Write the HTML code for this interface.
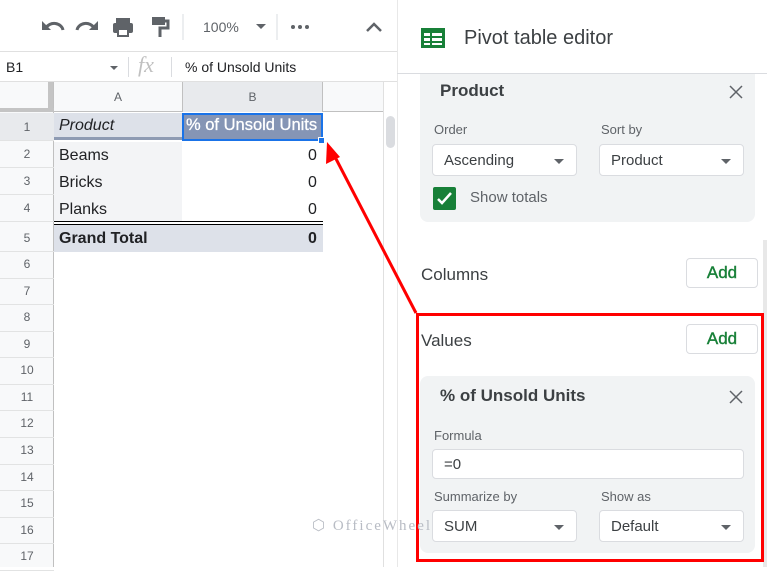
<!DOCTYPE html>
<html><head><style>
*{margin:0;padding:0;box-sizing:border-box}
body{width:767px;height:567px;overflow:hidden;background:#fff;font-family:"Liberation Sans",Arial,sans-serif;position:relative;color:#202124}
.a{position:absolute}
.rn{position:absolute;left:0;width:54px;text-align:center;font-size:12px;color:#5f6368;border-bottom:1px solid #e2e3e3}
.dd{position:absolute;background:#fff;border:1px solid #dadce0;border-radius:4px;font-size:15px;color:#3c4043;padding:7px 11px}
.dd.s:after{content:"";position:absolute;right:12px;top:14px;border:5px solid transparent;border-top:5px solid #5f6368}
.lbl{position:absolute;font-size:13px;color:#5f6368}
.btn{position:absolute;background:#fff;border:1px solid #dadce0;border-radius:4px;color:#188038;font-size:17px;text-align:center;line-height:27px;-webkit-text-stroke:0.4px #188038}
.x{position:absolute;font-size:26px;color:#5f6368;font-weight:100;line-height:26px}
</style></head><body>
<!-- toolbar -->
<div class="a" style="left:0;top:0;width:397px;height:52px;border-bottom:1px solid #e0e0e0"></div>
<svg class="a" style="left:40px;top:12px" width="350" height="30" viewBox="0 0 350 30">
<path d="M6 16 a9 8 0 0 1 17 2" stroke="#5f6368" stroke-width="3" fill="none"/><path d="M2 9v9h9z" fill="#5f6368"/>
<path d="M54 16 a9 8 0 0 0 -17 2" stroke="#5f6368" stroke-width="3" fill="none"/><path d="M58 9v9h-9z" fill="#5f6368"/>
<rect x="76" y="6" width="14" height="5" fill="#5f6368"/><rect x="73" y="11" width="20" height="10" rx="2" fill="#5f6368"/><rect x="78" y="17" width="10" height="7" fill="#fff" stroke="#5f6368" stroke-width="2"/>
<path d="M112 5h13v8h-13z" fill="#5f6368"/><path d="M125 9h3v7h-8v9" stroke="#5f6368" stroke-width="3" fill="none"/>
<line x1="143" y1="2" x2="143" y2="28" stroke="#dadce0"/>
<text x="163" y="20" font-size="14" fill="#5f6368" font-family="Liberation Sans">100%</text>
<path d="M216 12h10l-5 5z" fill="#5f6368"/>
<line x1="237" y1="2" x2="237" y2="28" stroke="#dadce0"/>
<circle cx="253" cy="15" r="2" fill="#5f6368"/><circle cx="260" cy="15" r="2" fill="#5f6368"/><circle cx="267" cy="15" r="2" fill="#5f6368"/>
<path d="M327 19l7-7 7 7" stroke="#5f6368" stroke-width="2.5" fill="none"/>
</svg>
<!-- formula bar -->
<div class="a" style="left:0;top:52px;width:397px;height:30px;border-bottom:1px solid #e0e0e0"></div>
<div class="a" style="left:6px;top:59px;font-size:14px">B1</div>
<div class="a" style="left:110px;top:66px;border:4px solid transparent;border-top:4px solid #5f6368"></div>
<div class="a" style="left:128px;top:57px;width:1px;height:20px;background:#dadce0"></div>
<div class="a" style="left:138px;top:52px;font-size:22px;font-style:italic;color:#c0c0c0;font-family:'Liberation Serif',serif">fx</div>
<div class="a" style="left:171px;top:57px;width:1px;height:20px;background:#dadce0"></div>
<div class="a" style="left:185px;top:59px;font-size:14px">% of Unsold Units</div>
<!-- grid -->
<div class="a" style="left:0;top:82px;width:383px;height:30px;background:#f8f9fa;border-bottom:1px solid #c0c0c0"></div>
<div class="a" style="left:0;top:82px;width:54px;height:485px;background:#f8f9fa;border-right:1px solid #c0c0c0"></div>
<div class="a" style="left:48px;top:82px;width:5px;height:30px;background:#c4c4c4"></div>
<div class="a" style="left:0;top:108px;width:54px;height:4px;background:#c4c4c4"></div>
<div class="a" style="left:182px;top:82px;width:141px;height:30px;background:#e8eaed;border-left:1px solid #c0c0c0;border-right:1px solid #c0c0c0"></div>
<div class="a" style="left:54px;top:90px;width:128px;text-align:center;font-size:12px;color:#5f6368">A</div>
<div class="a" style="left:182px;top:90px;width:141px;text-align:center;font-size:12px;color:#5f6368">B</div>
<div class="a" style="left:383px;top:82px;width:14px;height:485px;background:#fff;border-left:1px solid #e0e0e0"></div>
<div class="a" style="left:386px;top:116px;width:9px;height:32px;background:#dadce0;border-radius:5px"></div>
<div class="rn" style="top:113px;height:28px;line-height:28px;background:#e8eaed">1</div>
<div class="rn" style="top:141px;height:27px;line-height:27px">2</div>
<div class="rn" style="top:168px;height:27px;line-height:27px">3</div>
<div class="rn" style="top:195px;height:27px;line-height:27px">4</div>
<div class="rn" style="top:222px;height:30px;line-height:32px">5</div>
<div class="rn" style="top:252px;height:27px;line-height:25px">6</div>
<div class="rn" style="top:279px;height:26px;line-height:24px">7</div>
<div class="rn" style="top:305px;height:27px;line-height:25px">8</div>
<div class="rn" style="top:332px;height:26px;line-height:24px">9</div>
<div class="rn" style="top:358px;height:27px;line-height:25px">10</div>
<div class="rn" style="top:385px;height:26px;line-height:24px">11</div>
<div class="rn" style="top:411px;height:27px;line-height:25px">12</div>
<div class="rn" style="top:438px;height:27px;line-height:25px">13</div>
<div class="rn" style="top:465px;height:26px;line-height:24px">14</div>
<div class="rn" style="top:491px;height:27px;line-height:25px">15</div>
<div class="rn" style="top:518px;height:26px;line-height:24px">16</div>
<div class="rn" style="top:544px;height:27px;line-height:25px">17</div>
<!-- cells -->
<div class="a" style="left:54px;top:113px;width:129px;height:27px;background:#dde1e9;border-bottom:3px solid #8e9bb3"></div>
<div class="a" style="left:59px;top:117px;font-size:16px;font-style:italic">Product</div>
<div class="a" style="left:182px;top:113px;width:141px;height:28px;background:#8595b5;border:2px solid #1a73e8"></div>
<div class="a" style="left:186px;top:116px;font-size:16.5px;color:#fff;-webkit-text-stroke:0.3px #fff">% of Unsold Units</div>
<div class="a" style="left:318px;top:137px;width:7px;height:7px;background:#1a73e8;border:1px solid #fff"></div>
<div class="a" style="left:54px;top:142px;width:128px;height:80px;background:#f3f4f6"></div>
<div class="a" style="left:59px;top:147px;font-size:16px">Beams</div>
<div class="a" style="left:59px;top:174px;font-size:16px">Bricks</div>
<div class="a" style="left:59px;top:201px;font-size:16px">Planks</div>
<div class="a" style="left:308px;top:147px;font-size:16px">0</div>
<div class="a" style="left:308px;top:174px;font-size:16px">0</div>
<div class="a" style="left:308px;top:201px;font-size:16px">0</div>
<div class="a" style="left:54px;top:221px;width:269px;height:4px;border-top:1px solid #000;border-bottom:1px solid #000"></div>
<div class="a" style="left:54px;top:225px;width:269px;height:27px;background:#dde1e9"></div>
<div class="a" style="left:59px;top:230px;font-size:16px;font-weight:bold">Grand Total</div>
<div class="a" style="left:308px;top:230px;font-size:16px;font-weight:bold">0</div>
<!-- panel -->
<div class="a" style="left:397px;top:0;width:370px;height:567px;background:#fff;border-left:1px solid #e8e8e8"></div>
<div class="a" style="left:397px;top:73px;width:370px;height:1px;background:#dadce0"></div>
<svg class="a" style="left:421px;top:28px" width="24" height="20"><rect x="0" y="0" width="24" height="20" fill="#188038"/><rect x="3" y="5" width="6" height="3" fill="#fff"/><rect x="11" y="5" width="10" height="3" fill="#fff"/><rect x="3" y="10" width="6" height="3" fill="#fff"/><rect x="11" y="10" width="10" height="3" fill="#fff"/><rect x="3" y="15" width="6" height="2" fill="#fff"/><rect x="11" y="15" width="10" height="2" fill="#fff"/></svg>
<div class="a" style="left:464px;top:27px;font-size:20px;color:#3c4043">Pivot table editor</div>
<div class="a" style="left:420px;top:74px;width:335px;height:148px;background:#f1f3f4;border-radius:0 0 8px 8px"></div>
<div class="a" style="left:440px;top:81px;font-size:17px;font-weight:bold;color:#3c4043">Product</div>
<svg class="a" style="left:729px;top:85px" width="14" height="14"><path d="M1 1l12 12M13 1L1 13" stroke="#5f6368" stroke-width="1.5"/></svg>
<div class="lbl" style="left:434px;top:122px">Order</div>
<div class="lbl" style="left:601px;top:122px">Sort by</div>
<div class="dd s" style="left:432px;top:144px;width:145px;height:32px">Ascending</div>
<div class="dd s" style="left:599px;top:144px;width:145px;height:32px">Product</div>
<div class="a" style="left:433px;top:187px;width:23px;height:23px;background:#188038;border-radius:2px"></div>
<svg class="a" style="left:436px;top:191px" width="17" height="15"><path d="M2 8l4 4 9-10" stroke="#fff" stroke-width="2.5" fill="none"/></svg>
<div class="a" style="left:470px;top:189px;font-size:15px;color:#5f6368">Show totals</div>
<div class="a" style="left:421px;top:265px;font-size:17px;color:#3c4043">Columns</div>
<div class="btn" style="left:686px;top:258px;width:72px;height:30px">Add</div>
<div class="a" style="left:763px;top:240px;width:4px;height:327px;background:#e8e8e8"></div>
<div class="a" style="left:416px;top:313px;width:348px;height:249px;border:3px solid #f00"></div>
<div class="a" style="left:421px;top:331px;font-size:17px;color:#3c4043">Values</div>
<div class="btn" style="left:686px;top:324px;width:72px;height:30px">Add</div>
<div class="a" style="left:420px;top:376px;width:335px;height:177px;background:#f1f3f4;border-radius:8px"></div>
<div class="a" style="left:440px;top:386px;font-size:17px;font-weight:bold;color:#3c4043">% of Unsold Units</div>
<svg class="a" style="left:729px;top:390px" width="14" height="14"><path d="M1 1l12 12M13 1L1 13" stroke="#5f6368" stroke-width="1.5"/></svg>
<div class="lbl" style="left:434px;top:428px">Formula</div>
<div class="dd" style="left:432px;top:449px;width:312px;height:30px;padding-top:6px">=0</div>
<div class="lbl" style="left:434px;top:489px">Summarize by</div>
<div class="lbl" style="left:601px;top:489px">Show as</div>
<div class="dd s" style="left:432px;top:510px;width:145px;height:32px">SUM</div>
<div class="dd s" style="left:599px;top:510px;width:145px;height:32px">Default</div>
<!-- watermark -->
<div class="a" style="left:312px;top:516px;font-size:15px;color:#b8bcc4;font-family:'Liberation Serif',serif;letter-spacing:2px">⬡ OfficeWheel</div>
<!-- arrow -->
<svg class="a" style="left:0;top:0" width="767" height="567"><line x1="416" y1="313" x2="334" y2="155" stroke="#f00" stroke-width="3"/><path d="M327 142l-1 22 14-7z" fill="#f00"/></svg>
</body></html>
